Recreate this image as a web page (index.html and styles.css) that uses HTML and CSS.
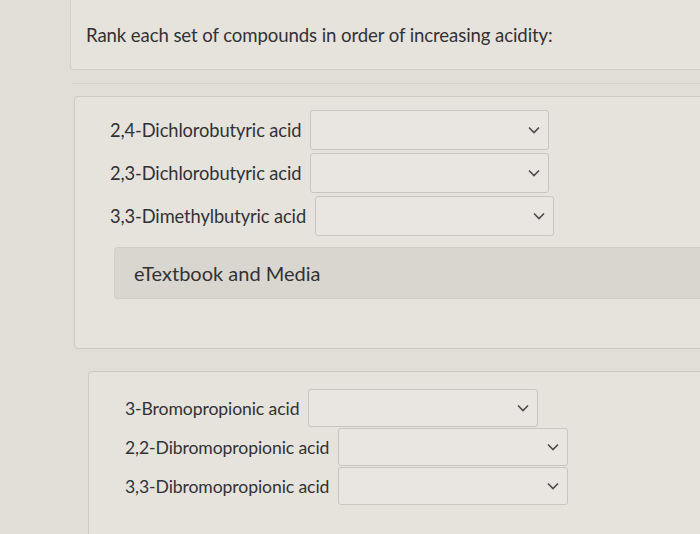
FILE: index.html
```html
<!DOCTYPE html>
<html>
<head>
  <title>Rank by acidity</title>
  <link rel="stylesheet" href="styles.css">
</head>
<body>
  <div class="page">
    <div class="prompt-card">
      <p class="prompt">Rank each set of compounds in order of increasing acidity:</p>
    </div>
    <div class="divider"></div>

    <div class="part-card">
      <div class="rank-list">
        <div class="rank-row">
          <span class="compound">2,4-Dichlorobutyric acid</span>
          <div class="picker">
            <svg class="chevron" viewBox="0 0 12 8"><path d="M1 1.5 L6 6.5 L11 1.5"/></svg>
          </div>
        </div>
        <div class="rank-row">
          <span class="compound">2,3-Dichlorobutyric acid</span>
          <div class="picker">
            <svg class="chevron" viewBox="0 0 12 8"><path d="M1 1.5 L6 6.5 L11 1.5"/></svg>
          </div>
        </div>
        <div class="rank-row">
          <span class="compound">3,3-Dimethylbutyric acid</span>
          <div class="picker">
            <svg class="chevron" viewBox="0 0 12 8"><path d="M1 1.5 L6 6.5 L11 1.5"/></svg>
          </div>
        </div>
      </div>
      <div class="media-bar">eTextbook and Media</div>
    </div>

    <div class="part-card part-card-second">
      <div class="rank-list rank-list-tight">
        <div class="rank-row">
          <span class="compound">3-Bromopropionic acid</span>
          <div class="picker">
            <svg class="chevron" viewBox="0 0 12 8"><path d="M1 1.5 L6 6.5 L11 1.5"/></svg>
          </div>
        </div>
        <div class="rank-row">
          <span class="compound">2,2-Dibromopropionic acid</span>
          <div class="picker">
            <svg class="chevron" viewBox="0 0 12 8"><path d="M1 1.5 L6 6.5 L11 1.5"/></svg>
          </div>
        </div>
        <div class="rank-row">
          <span class="compound">3,3-Dibromopropionic acid</span>
          <div class="picker">
            <svg class="chevron" viewBox="0 0 12 8"><path d="M1 1.5 L6 6.5 L11 1.5"/></svg>
          </div>
        </div>
      </div>
    </div>
  </div>
</body>
</html>
```

FILE: styles.css
```css
body {
  margin: 0;
  font-family: Lato, "Open Sans", sans-serif;
  color: #313234;
  background-color: #e1ded8;
}
.page {
  height: 534px;
  overflow: hidden;
  padding-left: 70px;
}
.prompt-card {
  height: 69px;
  margin-right: -10px;
  padding-left: 15px;
  display: flex;
  align-items: center;
  border: 1px solid #d2cfc9;
  border-top: none;
  border-radius: 0 0 0 4px;
  background-color: #e6e3dd;
}
.prompt {
  margin: 0;
  font-size: 18.6px;
  letter-spacing: -0.1px;
}
.divider {
  height: 13px;
  margin-left: 2px;
  border-bottom: 1px solid #d6d3cd;
}
.part-card {
  margin: 12px -10px 0 4px;
  padding: 13px 0 49px 35px;
  border: 1px solid #cdcac4;
  border-radius: 4px;
  background-color: #e6e3dd;
}
.part-card-second {
  margin-top: 22px;
  margin-left: 18px;
  padding-top: 17px;
  padding-left: 36px;
}
.rank-list {
  display: flex;
  flex-direction: column;
  gap: 3px;
}
.rank-list-tight {
  gap: 1px;
}
.rank-row {
  display: flex;
  align-items: center;
  gap: 9px;
}
.compound {
  font-size: 18.3px;
  letter-spacing: -0.1px;
}
.rank-list-tight .compound {
  font-size: 17.6px;
}
.picker {
  width: 239px;
  height: 40px;
  display: flex;
  align-items: center;
  justify-content: flex-end;
  padding-right: 8px;
  box-sizing: border-box;
  border: 1px solid #c9c6c0;
  border-radius: 3px;
  background-color: #e9e6e1;
}
.rank-list-tight .picker {
  width: 230px;
  height: 38px;
}
.chevron {
  width: 12px;
  height: 8px;
  fill: none;
  stroke: #4a4b4d;
  stroke-width: 1.6;
}
.media-bar {
  margin: 11px 0 0 4px;
  height: 50px;
  padding-left: 19px;
  display: flex;
  align-items: center;
  font-size: 20px;
  border: 1px solid #d0cdc7;
  border-right: none;
  border-radius: 4px 0 0 4px;
  background-color: #d9d6d0;
}
```
